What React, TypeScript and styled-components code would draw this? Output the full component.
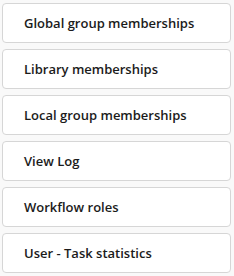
import React from "react";
import styled, { createGlobalStyle } from "styled-components";

const Global = createGlobalStyle`
  html, body { margin: 0; padding: 0; background: #f9f9f9; }
  body { font-family: "Open Sans", "Noto Sans", sans-serif; }
`;

const List = styled.div`
  display: flex;
  flex-direction: column;
  gap: 6px;
  padding: 3px 3px 0 2px;
`;

const Item = styled.div`
  box-sizing: border-box;
  height: 40px;
  display: flex;
  align-items: center;
  padding-left: 21px;
  background: #ffffff;
  border: 1px solid #d6d6d6;
  border-radius: 4px;
  font-size: 13px;
  font-weight: 600;
  color: #1b1b1b;
  cursor: pointer;
`;

const items = [
  "Global group memberships",
  "Library memberships",
  "Local group memberships",
  "View Log",
  "Workflow roles",
  "User - Task statistics",
];

export default function App() {
  return (
    <>
      <Global />
      <List>
        {items.map((t) => (
          <Item key={t}>{t}</Item>
        ))}
      </List>
    </>
  );
}
